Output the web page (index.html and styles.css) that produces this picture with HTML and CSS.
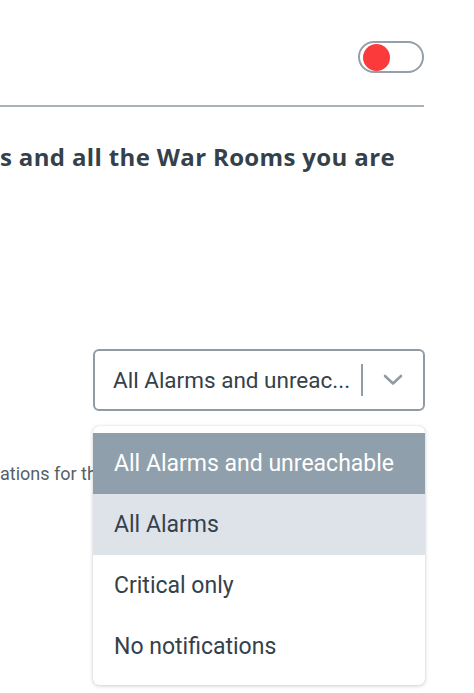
FILE: index.html
```html
<!DOCTYPE html>
<html lang="en">

<head>
    <meta charset="UTF-8">
    <title>Notifications</title>
    <link rel="stylesheet" href="styles.css">
</head>

<body>
    <div class="panel">
        <div class="panel-head">
            <button class="toggle" title="Notifications">
                <span class="toggle-knob"></span>
            </button>
        </div>

        <h2 class="title">s and all the War Rooms you are</h2>

        <div class="setting">
            <div class="select-row">
                <div class="select">
                    <div class="select-control">
                        <span class="select-value">All Alarms and unreac...</span>
                        <span class="select-sep"></span>
                        <svg class="select-arrow" width="20" height="12" viewBox="0 0 20 12">
                            <polyline points="2,2 10,9.5 18,2" fill="none" stroke="#8f9ca6" stroke-width="2.6" stroke-linecap="round" stroke-linejoin="round"/>
                        </svg>
                    </div>
                    <ul class="select-menu">
                        <li class="option selected">All Alarms and unreachable</li>
                        <li class="option focused">All Alarms</li>
                        <li class="option">Critical only</li>
                        <li class="option">No notifications</li>
                    </ul>
                </div>
            </div>
            <p class="hint">ations for th</p>
        </div>
    </div>
</body>

</html>
```

FILE: styles.css
```css
body {
    margin: 0;
    background-color: #fff;
    font-family: Roboto, "Open Sans", sans-serif;
    color: #35414a;
}

.panel {
    width: 474px;
    min-height: 693px;
}

.panel-head {
    width: 424px;
    display: flex;
    justify-content: flex-end;
    padding-top: 41px;
    padding-bottom: 32px;
    border-bottom: 2px solid #a9b3ba;
}

.toggle {
    width: 66px;
    height: 32px;
    box-sizing: border-box;
    border: 2px solid #959fa8;
    border-radius: 16px;
    background-color: #fff;
    padding: 0 0 0 3px;
    display: flex;
    align-items: center;
    cursor: pointer;
}

.toggle-knob {
    width: 27px;
    height: 27px;
    border-radius: 50%;
    background-color: #fb3a3c;
}

.title {
    margin: 34px 0 0 0;
    font-family: "Open Sans", sans-serif;
    font-size: 24px;
    line-height: 32px;
    font-weight: 700;
    letter-spacing: 0.35px;
    color: #35414a;
    white-space: nowrap;
}

.setting {
    margin-top: 176px;
}

.select-row {
    width: 425px;
    display: flex;
    justify-content: flex-end;
}

.select {
    width: 332px;
    position: relative;
}

.select-control {
    height: 62px;
    box-sizing: border-box;
    border: 2px solid #8f9ca6;
    border-radius: 6px;
    display: flex;
    align-items: center;
    padding-left: 18px;
    padding-right: 20px;
}

.select-value {
    flex: 1;
    font-size: 22.5px;
    color: #35414a;
    white-space: nowrap;
}

.select-sep {
    width: 2px;
    height: 32px;
    background-color: #8f9ca6;
    margin-right: 20px;
}

.select-arrow {
    display: block;
}

.select-menu {
    position: absolute;
    top: 77px;
    left: 0;
    right: 0;
    z-index: 2;
    margin: 0;
    padding: 7px 0 8px 0;
    list-style: none;
    background-color: #fff;
    border-radius: 6px;
    box-shadow: 0 1px 4px rgba(0, 0, 0, 0.18), 0 0 1px rgba(0, 0, 0, 0.2);
}

.option {
    height: 61px;
    display: flex;
    align-items: center;
    padding-left: 21px;
    font-size: 23px;
    color: #35414a;
}

.option.selected {
    background-color: #8f9fab;
    color: #fff;
}

.option.focused {
    background-color: #dee3ea;
}

.hint {
    margin: 51px 0 0 0;
    font-size: 18px;
    line-height: 24px;
    color: #555f67;
    white-space: nowrap;
}
```
